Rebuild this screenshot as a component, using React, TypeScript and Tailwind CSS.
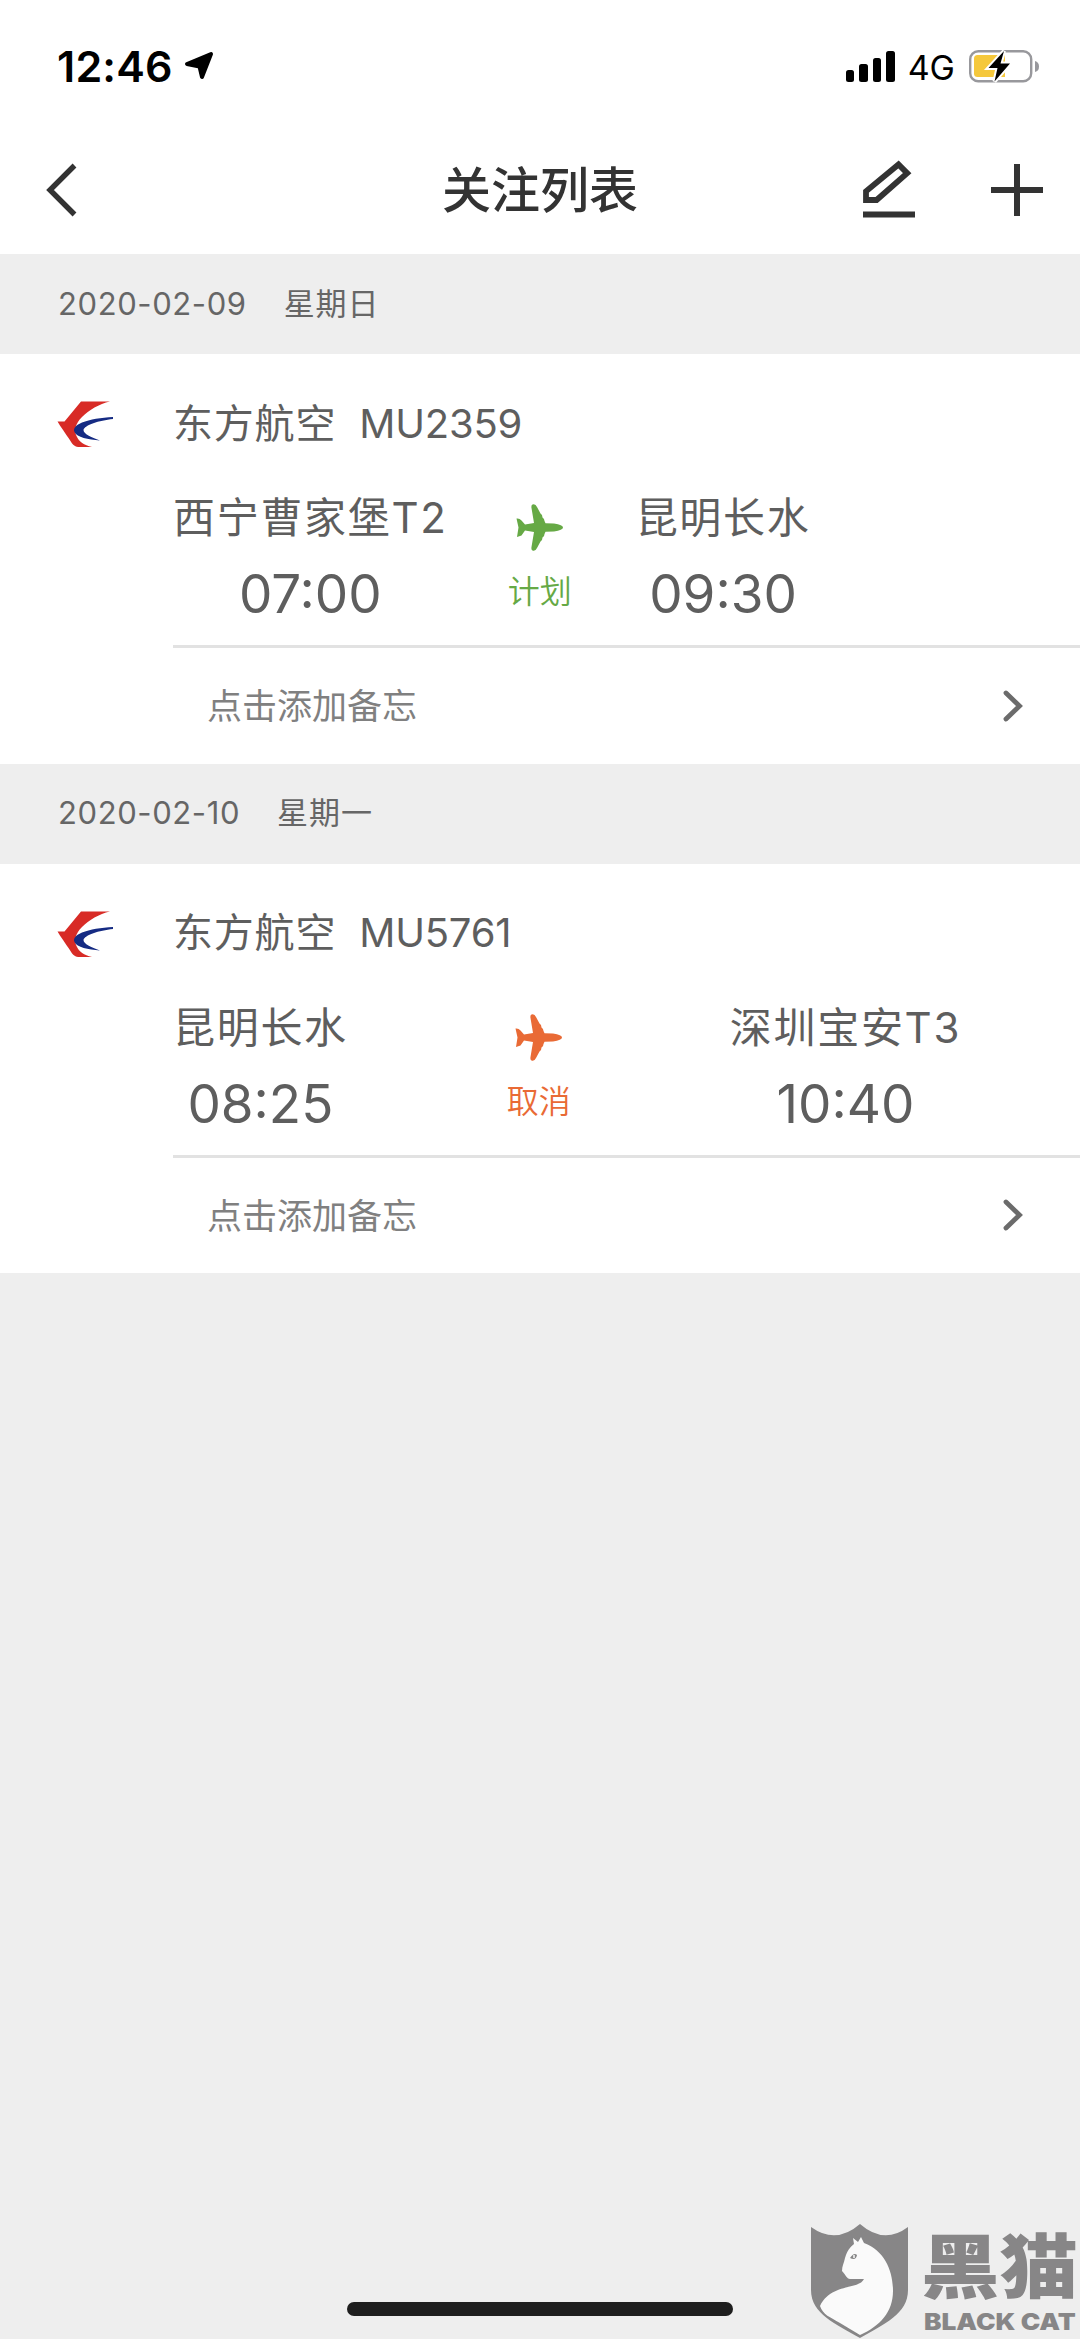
import { memo } from "react"
import { clsx } from "clsx"

type FlightStatus = "plan" | "cancel"

interface IAirport {
  name: string
  time: string
}

interface IFlight {
  id: string
  date: string
  weekday: string
  airline: string
  from: IAirport
  to: IAirport
  status: FlightStatus
}

const flights: IFlight[] = [
  {
    id: "MU2359",
    date: "2020-02-09",
    weekday: "星期日",
    airline: "东方航空",
    from: { name: "西宁曹家堡T2", time: "07:00" },
    to: { name: "昆明长水", time: "09:30" },
    status: "plan",
  },
  {
    id: "MU5761",
    date: "2020-02-10",
    weekday: "星期一",
    airline: "东方航空",
    from: { name: "昆明长水", time: "08:25" },
    to: { name: "深圳宝安T3", time: "10:40" },
    status: "cancel",
  },
]

const statusText = { plan: "计划", cancel: "取消" }

function StatusBar() {
  return (
    <div className="flex h-[132px] items-center pl-[57px] pr-[40px] text-black">
      <span className="text-[43px] font-semibold leading-none tracking-[0.200px]">12:46</span>
      <svg className="ml-[11px] h-[30px] w-[30px]" viewBox="0 0 30 30">
        <path d="M27 3 L18 26 L15.500 15.500 L3 13 Z" fill="#000" stroke="#000" strokeWidth="4" strokeLinejoin="round" />
      </svg>
      <div className="ml-auto flex h-[31px] items-end gap-[5px]">
        <i className="h-3 w-[8.500px] rounded-[2.500px] bg-black" />
        <i className="h-[18px] w-[8.500px] rounded-[2.500px] bg-black" />
        <i className="h-6 w-[8.500px] rounded-[2.500px] bg-black" />
        <i className="h-[31px] w-[8.500px] rounded-[2.500px] bg-black" />
      </div>
      <span className="ml-[13px] mt-[3px] text-[34px] leading-none">4G</span>
      <svg className="ml-[13px] h-[36px] w-[72px] shrink-0" viewBox="0 0 72 36">
        <rect x="2.200" y="3.200" width="61" height="30" rx="8" fill="#fff" stroke="#98989c" strokeWidth="2.400" />
        <path d="M9.500 7 H37 V29 H9.500 Q6 29 6 25.500 V10.500 Q6 7 9.500 7 Z" fill="#f5c83c" />
        <path d="M67 13 Q71 14 71 18.500 Q71 23 67 24 Z" fill="#98989c" />
        <path d="M36 3 L20.500 20 H29.500 L26.500 33.500 L42 15.500 H32.500 Z" fill="#000" stroke="#fff" strokeWidth="4" paintOrder="stroke" />
      </svg>
    </div>
  )
}

function NavBar() {
  return (
    <div className="grid h-[122px] grid-cols-[1fr_auto_1fr] items-center px-[36px] pb-[6px]">
      <svg className="ml-[8px] h-[54px] w-[34px]" viewBox="0 0 34 54" fill="none" stroke="#333" strokeWidth="5.400">
        <path d="M30.500 2.500 L6 27 L30.500 51.500" />
      </svg>
      <h1 className="pt-px text-[49px] font-medium leading-none text-[#333]">关注列表</h1>
      <div className="flex items-center justify-end gap-[72px]">
        <svg className="h-[60px] w-[56px]" viewBox="0 0 56 60" fill="none" stroke="#333" strokeWidth="5.800">
          <path d="M4 40 V31.300 L36.500 4.400 L45.200 13.200 L14.600 40 Z" />
          <path d="M1 54.500 H53" strokeWidth="6" />
        </svg>
        <svg className="h-[54px] w-[54px]" viewBox="0 0 54 54" stroke="#333" strokeWidth="6">
          <path d="M27 1 V53 M1 27 H53" />
        </svg>
      </div>
    </div>
  )
}

function AirlineLogo() {
  return (
    <svg className="h-[46px] w-[56px] shrink-0" viewBox="0 0 56 46">
      <path d="M24 .5 H53 C42 3 32 9 25 16 C18 23 17 30 19.500 35 C22 41 27 44 35 46 H23 C18 46 16 44 13.500 40 C9 33 3 25 .5 20.500 H7.500 Z" fill="#d82b26" />
      <path d="M56 16 C44 16.500 33 18.500 25 21.500 C18 24.500 16 28 17.500 31 C20 36.500 31 38.500 43 39.500 C34 36 26.500 33 26.500 29 C27.500 24 42 19.500 56 18 Z" fill="#152b83" />
    </svg>
  )
}

function Plane() {
  return (
    <svg className="h-[47px] w-[47px]" viewBox="0 0 47 47" fill="currentColor">
      <path d="M16.500 .5 Q19.500 -.5 21 3 L24.500 9.500 Q26.500 10.500 26.500 13.500 Q28.500 14.500 28.500 17 L29.500 19.300 L38 19.500 Q47 21 47 23.500 Q47 26 38 27.500 L29.500 27.700 L28.500 30 Q28.500 32.500 26.500 33.500 Q26.500 36.500 24.500 37.500 L21 44 Q19.500 47.500 16.500 46.500 Q15 46 15.500 43 L18 28 L9 26.500 L5.500 31.500 L1 33 L2.500 23.500 L.5 14.500 Q3.500 14 5.500 16.500 L9 20.500 L18 19 L15.500 4 Q15 1 16.500 .5 Z" />
    </svg>
  )
}

function Airport({ name, time }: IAirport) {
  return (
    <div className="flex flex-col items-center text-[#5e5e5e]">
      <span className="whitespace-nowrap text-[42px] leading-[50px] tracking-[1.700px]">{name}</span>
      <span className="mt-[26px] text-[53px] leading-[50px]">{time}</span>
    </div>
  )
}

const FlightItem = memo(function FlightItem({ flight }: { flight: IFlight }) {
  const cancelled = flight.status === "cancel"
  return (
    <section>
      <div className="flex h-[100px] items-center bg-[#eee] pl-[58px] text-[31px] text-[#666]">
        <span className="tracking-[0.600px]">{flight.date}</span>
        <span className="ml-[37px] tracking-[0.900px]">{flight.weekday}</span>
      </div>
      <div className="flex h-[409.500px] bg-white pl-[57px]">
        <div className="w-[116px] pt-[47px]">
          <AirlineLogo />
        </div>
        <div className="flex-1">
          <div className="flex h-[138px] items-center gap-[23px] pt-px text-[40px] text-[#5e5e5e]">
            <span className="tracking-[0.800px]">{flight.airline}</span>
            <span className="tracking-[-0.200px]">{flight.id}</span>
          </div>
          <div className="flex h-[153px] pt-px">
            <Airport {...flight.from} />
            <div className={clsx("flex w-[68px] flex-col items-center pt-[11px]", cancelled ? "ml-[157px] mr-[157px] text-[#e96a35]" : "ml-[58px] mr-[62px] text-[#66a945]")}>
              <Plane />
              <span className="mt-[21px] text-[32px] font-[350] leading-[40px]">{statusText[flight.status]}</span>
            </div>
            <Airport {...flight.to} />
          </div>
          <div className="flex h-[118.500px] items-center justify-between border-t-[3px] border-[#e2e2e2] pl-[34px] pr-[56px]">
            <span className="pt-px text-[35px] text-[#808080]">点击添加备忘</span>
            <svg className="h-[34px] w-[22px]" viewBox="0 0 22 34" fill="none" stroke="#6b6b6b" strokeWidth="4.800" strokeLinecap="round">
              <path d="M4 4 L17.500 17 L4 30" />
            </svg>
          </div>
        </div>
      </div>
    </section>
  )
})

// brand mark floating over the bottom right corner
function BlackCat() {
  return (
    <div className="absolute bottom-0 right-0 flex h-[117px] w-[270px] text-[#878687]">
      <svg className="h-[117px] w-[100px] shrink-0" viewBox="0 0 100 117">
        <path d="M1 5 Q26 23 50 2 Q74 23 98 5 V68 C98 92 74 102 50 116 C26 102 1 92 1 68 Z" fill="currentColor" />
        <path d="M43 16 L48 20 L51 15 L54 21 C75 29 83 49 83 69 C83 90 70 104 50 113 L30 101 C20 95 13 93 10 84 C21 61 49 68 54 57 H40 C37 57 35 52 32 49 C32 44 34 41 35 36 C37 29 40 25 44 22 Z" fill="#fafafa" />
        <path d="M40 36 Q44 30 47 33 Q46 39 40 36 Z" fill="currentColor" />
        <path d="M44 33 V36" stroke="#fafafa" strokeWidth="1.500" />
      </svg>
      <div className="ml-[13px] flex flex-col whitespace-nowrap">
        <span className="-ml-[2px] mt-[8px] origin-center scale-y-[0.9] text-[78.500px] font-black leading-[76px]">黑猫</span>
        <span className="ml-px mt-[4px] origin-left scale-x-[1.14] text-[23px] font-black leading-[24px]">BLACK CAT</span>
      </div>
    </div>
  )
}

export default function App() {
  return (
    <div className="relative flex h-[2339px] w-[1080px] flex-col overflow-hidden bg-[#eee] font-['Inter','Noto_Sans_CJK_SC',sans-serif]">
      <header className="bg-white">
        <StatusBar />
        <NavBar />
      </header>
      <main>
        {flights.map((flight) => (
          <FlightItem key={flight.id} flight={flight} />
        ))}
      </main>
      <div className="mx-auto mb-[23px] mt-auto h-[14px] w-[386px] rounded-full bg-[#1e1e1e]" />
      <BlackCat />
    </div>
  )
}
